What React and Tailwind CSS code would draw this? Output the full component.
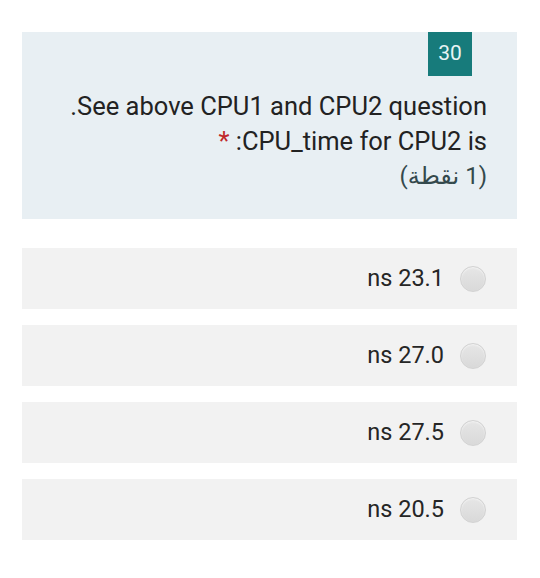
import React from "react";

const options = ["ns 23.1", "ns 27.0", "ns 27.5", "ns 20.5"];

function Radio() {
  return (
    <div className="w-[26px] h-[26px] rounded-full border border-[#d2d2d2] bg-gradient-to-b from-[#e6e6e6] to-[#d9d9d9] shadow-[inset_0_1px_2px_rgba(255,255,255,0.6)]" />
  );
}

export default function App() {
  return (
    <div className="w-[540px] h-[578px] bg-white pt-[32px] pl-[22px] pr-[23px]" style={{ fontFamily: "Roboto, 'Noto Sans', sans-serif" }}>
      <div className="bg-[#e8eff3] h-[187px] flex flex-col items-end pr-[30px]">
        <div className="mr-[15px] w-[44px] h-[44px] bg-[#177b7b] text-[#e8f4f4] text-[21px] flex items-center justify-center">30</div>
        <div className="mt-[13px] text-right text-[25.5px] leading-[35px] text-[#222222]">
          <div>.See above CPU1 and CPU2 question</div>
          <div><span className="text-[#c0282a]">*</span> :CPU_time for CPU2 is</div>
          <div dir="rtl" className="text-[#34494c] text-[24px]" style={{ fontFamily: "Roboto, 'Noto Sans', 'DejaVu Sans', sans-serif" }}>(1 نقطة)</div>
        </div>
      </div>
      <div className="mt-[29px] flex flex-col gap-[16px]">
        {options.map((o) => (
          <div key={o} className="bg-[#f2f2f2] h-[61px] flex items-center justify-end pr-[31px] gap-[16px]">
            <span className="text-[23.5px] text-[#262626]">{o}</span>
            <Radio />
          </div>
        ))}
      </div>
    </div>
  );
}
